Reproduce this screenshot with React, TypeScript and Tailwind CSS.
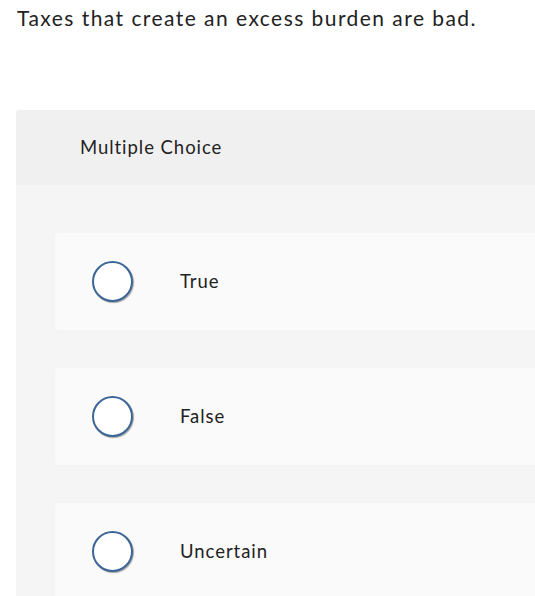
import React from "react";

const options = ["True", "False", "Uncertain"];

export default function App() {
  return (
    <div
      className="w-[535px] h-[596px] overflow-hidden bg-white text-[#222]"
      style={{ fontFamily: "Lato, 'Open Sans', sans-serif" }}
    >
      <p className="pl-[17px] pt-[4px] text-[21px] leading-[28px] tracking-[1.45px]">
        Taxes that create an excess burden are bad.
      </p>
      <div className="mt-[78px] ml-4 w-[560px] rounded-t bg-[#f5f5f5]">
        <div className="h-[75px] rounded-t bg-[#f0f0f0] flex items-center pl-16 text-[18.5px] tracking-[0.95px]">
          Multiple Choice
        </div>
        <div className="pt-12 pl-[39px] flex flex-col gap-[38px]">
          {options.map((o) => (
            <div
              key={o}
              className="h-[97px] rounded bg-[#fafafa] flex items-center pl-[37px]"
            >
              <div className="w-[41px] h-[41px] rounded-full border-2 border-[#3b6696] bg-white shadow-[1px_1px_1px_rgba(0,0,0,0.35)]" />
              <span className="ml-[47px] text-[18.5px] tracking-[0.95px]">{o}</span>
            </div>
          ))}
        </div>
      </div>
    </div>
  );
}
